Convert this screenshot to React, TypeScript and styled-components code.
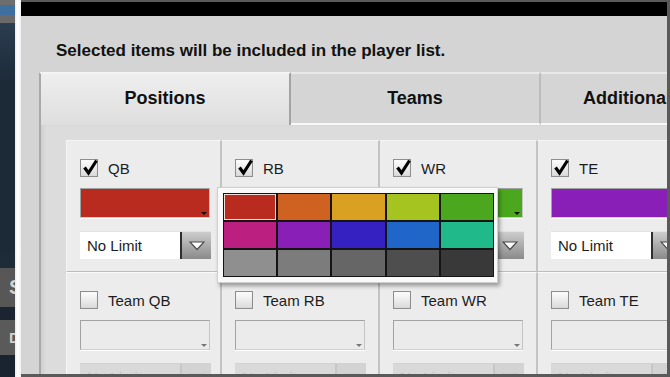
import styled, { createGlobalStyle } from "styled-components";

const GlobalStyle = createGlobalStyle`
	html, body {
		margin: 0;
		padding: 0;
		background: #5a5a5a;
	}
	* {
		box-sizing: border-box;
	}
`;

const FONT = `"Liberation Sans", Arial, sans-serif`;

const Page = styled.div`
	width: 670px;
	height: 377px;
	display: flex;
	overflow: hidden;
	background: #5a5a5a;
	font-family: ${FONT};
`;

const LeftStrip = styled.div`
	width: 15px;
	flex-shrink: 0;
	display: flex;
	flex-direction: column;
	overflow: hidden;
`;

const Segment = styled.div<{ $h: number; $bg: string }>`
	height: ${(p) => p.$h}px;
	flex-shrink: 0;
	background: ${(p) => p.$bg};
	color: #d0d0d0;
	font-weight: bold;
	display: flex;
	align-items: center;
	padding-left: 9px;
	white-space: nowrap;
	overflow: hidden;
`;

const Letter = styled.span<{ $size: number }>`
	font-size: ${(p) => p.$size}px;
`;

const Edge = styled.div`
	width: 6px;
	flex-shrink: 0;
	background: linear-gradient(to right, #e8e8e8, #ffffff 40%, #f2f2f2);
`;

const Frame = styled.div`
	flex: 1;
	min-width: 0;
	padding: 2px 3px 3px 0;
	display: flex;
`;

const Panel = styled.div`
	flex: 1;
	min-width: 0;
	background: #d4d4d4;
	overflow: hidden;
	display: flex;
	flex-direction: column;
`;

const TopBar = styled.div`
	height: 14px;
	flex-shrink: 0;
	background: #000;
`;

const Body = styled.div`
	flex: 1;
	padding-top: 25px;
	display: flex;
	flex-direction: column;
`;

const Intro = styled.div`
	padding-left: 35px;
	font-size: 17px;
	line-height: 20px;
	font-weight: bold;
	color: #111;
	white-space: nowrap;
`;

const TabRow = styled.div`
	margin: 11px 0 0 18px;
	display: flex;
	height: 53px;
	flex-shrink: 0;
`;

const Tab = styled.div<{ $active?: boolean; $w: number }>`
	width: ${(p) => p.$w}px;
	flex-shrink: 0;
	display: flex;
	align-items: center;
	justify-content: center;
	font-size: 18px;
	font-weight: bold;
	color: #111;
	white-space: nowrap;
	padding-bottom: ${(p) => (p.$active ? 2 : 0)}px;
	background: ${(p) => (p.$active ? "linear-gradient(#eeeeee, #dedede)" : "#d5d5d5")};
	border-top: 2px solid ${(p) => (p.$active ? "#f4f4f4" : "#e9e9e9")};
	border-left: ${(p) => (p.$active ? "2px solid #a9a9a9" : "none")};
	border-right: 2px solid ${(p) => (p.$active ? "#a3a3a3" : "#bcbcbc")};
	border-bottom: ${(p) => (p.$active ? "none" : "2px solid #f8f8f8")};
`;

const Content = styled.div`
	flex: 1;
	margin-left: 18px;
	border-left: 2px solid #a9a9a9;
	background: #dcdcdc;
	box-shadow: inset 3px 0 3px rgba(0, 0, 0, 0.05);
	padding: 15px 0 0 25px;
`;

const Grid = styled.div`
	position: relative;
	display: grid;
	grid-template-columns: 156px 158px 158px 158px;
	width: max-content;
`;

const Cell = styled.div<{ $first?: boolean; $top?: boolean }>`
	height: 132px;
	background: #ececec;
	padding: ${(p) => (p.$top ? 18 : 18)}px 0 0 13px;
	border-right: 2px solid #c3c3c3;
	border-left: ${(p) => (p.$first ? "1px solid #f6f6f6" : "none")};
	border-top: 1px solid ${(p) => (p.$top ? "#f5f5f5" : "#fafafa")};
	border-bottom: ${(p) => (p.$top ? "1px solid #bdbdbd" : "none")};
	display: flex;
	flex-direction: column;
`;

const CheckRow = styled.label`
	display: flex;
	align-items: center;
	gap: 10px;
	height: 18px;
	font-size: 15px;
	color: #1c1c1c;
	white-space: nowrap;
`;

const Box = styled.span`
	width: 18px;
	height: 18px;
	flex-shrink: 0;
	border: 1px solid #8e8e8e;
	background: linear-gradient(#fdfdfd, #dadada);
	box-shadow: inset 0 0 1px rgba(0, 0, 0, 0.15);
	display: flex;
	svg {
		overflow: visible;
	}
`;

const Swatch = styled.div<{ $color?: string }>`
	position: relative;
	margin-top: 11px;
	width: 130px;
	height: 30px;
	border: 1px solid #a2a2a2;
	border-bottom-color: #cfcfcf;
	border-right-color: #c4c4c4;
	box-shadow: 0 1px 0 #ffffff;
	background: ${(p) => p.$color ?? "#ebebeb"};
`;

const SwatchArrow = styled.span<{ $dim?: boolean }>`
	position: absolute;
	right: 2px;
	bottom: 2px;
	width: 0;
	height: 0;
	border-left: 3px solid transparent;
	border-right: 3px solid transparent;
	border-top: 3px solid ${(p) => (p.$dim ? "#777" : "#111")};
`;

const Select = styled.div<{ $disabled?: boolean }>`
	margin-top: 13px;
	width: 131px;
	height: 28px;
	display: flex;
	background: ${(p) => (p.$disabled ? "#d9d9d9" : "#fff")};
	border-top: 1px solid ${(p) => (p.$disabled ? "#d2d2d2" : "#e2e2e2")};
`;

const SelectText = styled.div<{ $disabled?: boolean }>`
	width: 102px;
	padding-left: 7px;
	display: flex;
	align-items: center;
	font-size: 15px;
	color: ${(p) => (p.$disabled ? "#bdbdbd" : "#1c1c1c")};
	border-right: 2px solid ${(p) => (p.$disabled ? "#c6c6c6" : "#2e2e2e")};
	white-space: nowrap;
`;

const SelectButton = styled.div<{ $disabled?: boolean }>`
	flex: 1;
	display: flex;
	align-items: center;
	justify-content: center;
	background: ${(p) => (p.$disabled ? "#d0d0d0" : "linear-gradient(#cdcdcd, #8a8a8a)")};
	opacity: ${(p) => (p.$disabled ? 0.6 : 1)};
`;

const Popup = styled.div`
	position: absolute;
	left: 151px;
	top: 47px;
	width: 281px;
	height: 96px;
	padding: 5px 0 0 5px;
	background: #f9f9f9;
	border: 1px solid #d0d0d0;
	box-shadow: 2px 3px 4px rgba(0, 0, 0, 0.35);
`;

const Palette = styled.div`
	width: 271px;
	height: 84px;
	display: grid;
	grid-template-columns: repeat(5, 1fr);
	grid-template-rows: repeat(3, 1fr);
	gap: 2px;
	padding: 1px;
	background: #141414;
`;

const Chip = styled.div<{ $color: string; $selected?: boolean }>`
	background: ${(p) => p.$color};
	box-shadow: ${(p) => (p.$selected ? "inset 0 0 0 1px #f3ddd8" : "none")};
`;

const palette = [
	"#b92a1f", "#cf6220", "#d9a021", "#a6c420", "#4ba81e",
	"#bb1f80", "#8a1fb8", "#3520c2", "#1f66c8", "#20b98a",
	"#8f8f8f", "#7c7c7c", "#666666", "#4e4e4e", "#393939",
];

const positions = [
	{ name: "QB", color: "#b92b1e" },
	{ name: "RB", color: "#1f66c8" },
	{ name: "WR", color: "#4ba81e" },
	{ name: "TE", color: "#8a1fb8" },
];

const Check = () => (
	<svg width="18" height="16" viewBox="0 0 18 16">
		<polyline points="3.5,7.5 7.5,13 15.5,0.5" fill="none" stroke="#000" strokeWidth="3.2" />
	</svg>
);

const Caret = ({ dim }: { dim?: boolean }) => (
	<svg width="16" height="10" viewBox="0 0 16 10">
		<polygon points="1,1 15,1 8,8.5" fill={dim ? "#e6e6e6" : "#fff"} stroke={dim ? "#bbb" : "#4a4a4a"} strokeWidth="1.2" />
	</svg>
);

const PositionCell = ({ name, color, team, first }: { name: string; color: string; team?: boolean; first?: boolean }) => (
	<Cell $first={first} $top={!team}>
		<CheckRow>
			<Box>{!team && <Check />}</Box>
			{team ? `Team ${name}` : name}
		</CheckRow>
		<Swatch $color={team ? undefined : color}>
			<SwatchArrow $dim={team} />
		</Swatch>
		<Select $disabled={team}>
			<SelectText $disabled={team}>No Limit</SelectText>
			<SelectButton $disabled={team}>
				<Caret dim={team} />
			</SelectButton>
		</Select>
	</Cell>
);

const App = () => {
	return (
		<>
			<GlobalStyle />
			<Page>
				<LeftStrip>
					<Segment $h={5} $bg="#6e6e6e" />
					<Segment $h={10} $bg="#3f6f9f" />
					<Segment $h={8} $bg="#6a6a6a" />
					<Segment $h={57} $bg="linear-gradient(#2c3d50, #1d2b3a)" />
					<Segment $h={173} $bg="#1c2937" />
					<Segment $h={15} $bg="#1e2b38" />
					<Segment $h={39} $bg="#575757">
						<Letter $size={20}>S</Letter>
					</Segment>
					<Segment $h={13} $bg="#1a2531" />
					<Segment $h={35} $bg="#5a5a5a">
						<Letter $size={15}>D</Letter>
					</Segment>
					<Segment $h={22} $bg="#1a2430" />
				</LeftStrip>
				<Edge />
				<Frame>
					<Panel>
						<TopBar />
						<Body>
							<Intro>Selected items will be included in the player list.</Intro>
							<TabRow>
								<Tab $active $w={252}>Positions</Tab>
								<Tab $w={250}>Teams</Tab>
								<Tab $w={250}>Additional Settings</Tab>
							</TabRow>
							<Content>
								<Grid>
									{positions.map((p, i) => (
										<PositionCell key={p.name} name={p.name} color={p.color} first={i === 0} />
									))}
									{positions.map((p, i) => (
										<PositionCell key={"team" + p.name} name={p.name} color={p.color} team first={i === 0} />
									))}
									<Popup>
										<Palette>
											{palette.map((c, i) => (
												<Chip key={c} $color={c} $selected={i === 0} />
											))}
										</Palette>
									</Popup>
								</Grid>
							</Content>
						</Body>
					</Panel>
				</Frame>
			</Page>
		</>
	);
};

export default App;
